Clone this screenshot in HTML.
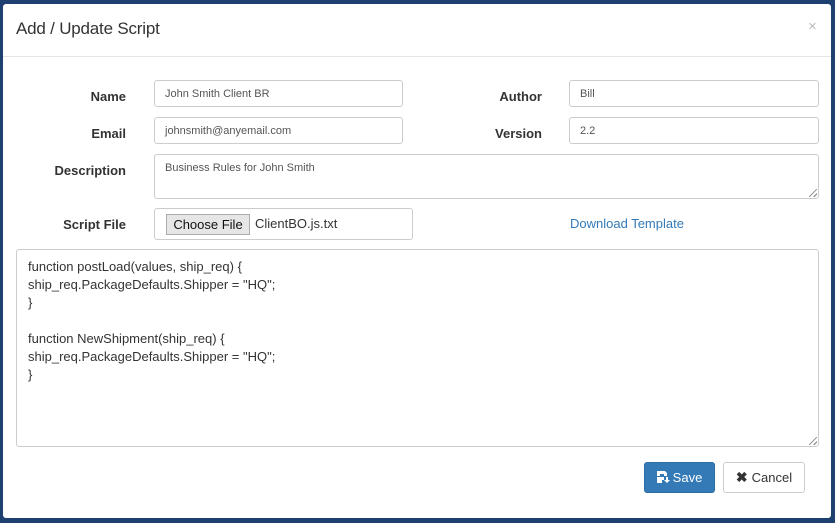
<!DOCTYPE html>
<html><head><style>
body{margin:0;width:835px;height:523px;background:#1e4070;position:relative;overflow:hidden;font-family:"Liberation Sans",sans-serif;}
.m{position:absolute;left:3px;top:4px;width:828px;height:514px;background:#fff;border-radius:3px;}
.a{position:absolute;}
.h{left:16px;top:19px;font-size:17px;color:#333;letter-spacing:-0.2px;}
.x{left:808px;top:18px;font-size:15px;color:#bbb;}
.sep{left:3px;top:56px;width:828px;height:1px;background:#e5e5e5;}
.l{font-size:13px;font-weight:bold;color:#333;text-align:right;width:120px;}
.i{border:1px solid #ccc;border-radius:3px;box-sizing:border-box;font-size:11px;color:#555;padding:7px 10px;}
.b{border-radius:3px;box-sizing:border-box;font-size:13px;text-align:center;line-height:29px;}
pre{margin:0;font-family:"Liberation Sans",sans-serif;font-size:13px;line-height:18px;color:#333;}
.rz{position:absolute;right:1px;bottom:1px;width:8px;height:8px;background:linear-gradient(135deg,transparent 45%,#999 45%,#999 55%,transparent 55%,transparent 75%,#999 75%,#999 85%,transparent 85%);}
</style></head><body>
<div class="m"></div>
<div class="a h">Add / Update Script</div>
<div class="a x">×</div>
<div class="a sep"></div>
<div class="a l" style="left:6px;top:89px">Name</div>
<div class="a l" style="left:6px;top:126px">Email</div>
<div class="a l" style="left:6px;top:163px">Description</div>
<div class="a l" style="left:6px;top:217px">Script File</div>
<div class="a l" style="left:422px;top:89px">Author</div>
<div class="a l" style="left:422px;top:126px">Version</div>
<div class="a i" style="left:154px;top:80px;width:249px;height:27px">John Smith Client BR</div>
<div class="a i" style="left:154px;top:117px;width:249px;height:27px">johnsmith@anyemail.com</div>
<div class="a i" style="left:569px;top:80px;width:250px;height:27px">Bill</div>
<div class="a i" style="left:569px;top:117px;width:250px;height:27px">2.2</div>
<div class="a i" style="left:154px;top:154px;width:665px;height:45px">Business Rules for John Smith<div class="rz"></div></div>
<div class="a i" style="left:154px;top:208px;width:259px;height:32px"></div>
<div class="a" style="left:166px;top:214px;width:84px;height:21px;box-sizing:border-box;border:1px solid #adadad;background:#e6e6e6;font-size:13px;line-height:19px;text-align:center;color:#111">Choose File</div>
<div class="a" style="left:255px;top:216px;font-size:13px;color:#333">ClientBO.js.txt</div>
<div class="a" style="left:570px;top:216px;font-size:13px;color:#337ab7">Download Template</div>
<div class="a i" style="left:16px;top:249px;width:803px;height:198px;padding:8px 11px"><pre>function postLoad(values, ship_req) {
ship_req.PackageDefaults.Shipper = "HQ";
}

function NewShipment(ship_req) {
ship_req.PackageDefaults.Shipper = "HQ";
}</pre><div class="rz"></div></div>
<div class="a b" style="left:644px;top:462px;width:71px;height:31px;background:#337ab7;color:#fff;border:1px solid #2e6da4">
<svg width="13" height="12" viewBox="0 0 13 12" style="vertical-align:-1px;margin-right:3px"><path d="M0 0h8l2 2v3H7V3H3v2H0z M0 6h7v3h-2v3H0z M9 6h2v3h2l-3 3-3-3h2z" fill="#fff"/></svg>Save</div>
<div class="a b" style="left:723px;top:462px;width:82px;height:31px;background:#fff;color:#333;border:1px solid #ccc"><b style="font-size:14px;margin-right:4px">✖</b>Cancel</div>
</body></html>
